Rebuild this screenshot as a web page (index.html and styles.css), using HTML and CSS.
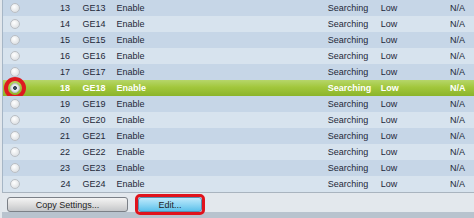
FILE: index.html
```html
<!DOCTYPE html>
<html lang="en">
<head>
    <meta charset="UTF-8">
    <title>Port Settings</title>
    <link rel="stylesheet" href="styles.css">
</head>
<body>
    <div class="port-panel">
        <table class="port-table">
            <colgroup>
                <col class="c-sel"><col class="c-num"><col class="c-port"><col class="c-state">
                <col class="c-status"><col class="c-prio"><col class="c-na">
            </colgroup>
            <tbody>
                <tr><td class="sel"><span class="radio"></span></td><td class="num">13</td><td class="port">GE13</td><td>Enable</td><td>Searching</td><td>Low</td><td>N/A</td></tr>
                <tr><td class="sel"><span class="radio"></span></td><td class="num">14</td><td class="port">GE14</td><td>Enable</td><td>Searching</td><td>Low</td><td>N/A</td></tr>
                <tr><td class="sel"><span class="radio"></span></td><td class="num">15</td><td class="port">GE15</td><td>Enable</td><td>Searching</td><td>Low</td><td>N/A</td></tr>
                <tr><td class="sel"><span class="radio"></span></td><td class="num">16</td><td class="port">GE16</td><td>Enable</td><td>Searching</td><td>Low</td><td>N/A</td></tr>
                <tr><td class="sel"><span class="radio"></span></td><td class="num">17</td><td class="port">GE17</td><td>Enable</td><td>Searching</td><td>Low</td><td>N/A</td></tr>
                <tr class="selected"><td class="sel"><span class="radio checked"></span></td><td class="num">18</td><td class="port">GE18</td><td>Enable</td><td>Searching</td><td>Low</td><td>N/A</td></tr>
                <tr><td class="sel"><span class="radio"></span></td><td class="num">19</td><td class="port">GE19</td><td>Enable</td><td>Searching</td><td>Low</td><td>N/A</td></tr>
                <tr><td class="sel"><span class="radio"></span></td><td class="num">20</td><td class="port">GE20</td><td>Enable</td><td>Searching</td><td>Low</td><td>N/A</td></tr>
                <tr><td class="sel"><span class="radio"></span></td><td class="num">21</td><td class="port">GE21</td><td>Enable</td><td>Searching</td><td>Low</td><td>N/A</td></tr>
                <tr><td class="sel"><span class="radio"></span></td><td class="num">22</td><td class="port">GE22</td><td>Enable</td><td>Searching</td><td>Low</td><td>N/A</td></tr>
                <tr><td class="sel"><span class="radio"></span></td><td class="num">23</td><td class="port">GE23</td><td>Enable</td><td>Searching</td><td>Low</td><td>N/A</td></tr>
                <tr><td class="sel"><span class="radio"></span></td><td class="num">24</td><td class="port">GE24</td><td>Enable</td><td>Searching</td><td>Low</td><td>N/A</td></tr>
            </tbody>
        </table>
        <div class="button-bar">
            <button class="btn btn-copy">Copy Settings...</button>
            <span class="highlight"><button class="btn btn-edit">Edit...</button></span>
        </div>
        <div class="footer-strip"></div>
    </div>
</body>
</html>
```

FILE: styles.css
```css
body {
    margin: 0;
    font-family: "Liberation Sans", Arial, sans-serif;
    background: #e2e7ec;
    overflow: hidden;
}
.port-panel {
    width: 474px;
    padding-left: 2px;
    box-sizing: border-box;
}
.port-table {
    width: 472px;
    border-collapse: collapse;
    table-layout: fixed;
    border-left: 1px solid #a6b6c6;
    font-size: 9px;
    color: #1e2838;
}
.c-sel { width: 25px; }
.c-num { width: 43px; }
.c-port { width: 46px; }
.c-state { width: 211px; }
.c-status { width: 53px; }
.c-prio { width: 69px; }
.c-na { width: 24px; }
.port-table td {
    height: 16px;
    padding: 0;
    white-space: nowrap;
    overflow: visible;
}
.port-table tr:nth-child(odd) td {
    background: #c6d6e7;
}
.port-table tr:nth-child(even) td {
    background: #d7e3ee;
}
.port-table tr.selected td {
    background: linear-gradient(#b6d66a, #a2c73c 45%, #8bb42a);
    color: #ffffff;
    font-weight: bold;
}
.sel {
    text-align: center;
    position: relative;
}
.num {
    text-align: right;
}
.port {
    padding-left: 12px !important;
}
.radio {
    display: inline-block;
    width: 8px;
    height: 8px;
    border-radius: 50%;
    border: 1px solid #b9bec4;
    background: radial-gradient(circle at 40% 35%, #ffffff, #d4d8dc);
    vertical-align: middle;
    position: relative;
}
.radio.checked {
    background: radial-gradient(circle, #3a4a5a 0 1.8px, #eef1f3 2.2px, #c9ced3);
}
.radio.checked::after {
    content: "";
    position: absolute;
    left: -7px;
    top: -7px;
    width: 14px;
    height: 14px;
    border: 4px solid #de1a1f;
    border-radius: 50%;
}
.button-bar {
    display: flex;
    align-items: flex-start;
    gap: 7px;
    height: 20px;
    padding-left: 5px;
    padding-top: 1px;
    box-sizing: border-box;
    border-top: 1px solid #a9b4bf;
    background: #e3e8ed;
}
.btn {
    height: 15px;
    padding: 0;
    font-family: "Liberation Sans", Arial, sans-serif;
    font-size: 9px;
    color: #1e1e1e;
    border: 1px solid #7b8087;
    border-radius: 3px;
    cursor: pointer;
}
.btn-copy {
    width: 121px;
    margin-top: 3px;
    background: linear-gradient(#f4f4f4, #dedede 50%, #c4c6c9);
}
.highlight {
    display: inline-flex;
    border: 3px solid #e0131c;
    border-radius: 5px;
    position: relative;
    z-index: 1;
}
.btn-edit {
    width: 64px;
    background: linear-gradient(#bfe9fb, #8fd6f4 50%, #5cc0ea);
    border-color: #5a8fb0;
}
.footer-strip {
    height: 6px;
    background: #b8c3ce;
}
```
